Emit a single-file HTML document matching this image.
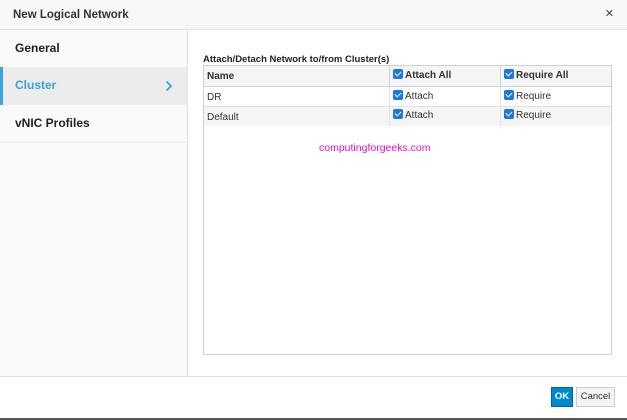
<!DOCTYPE html>
<html><head><style>
*{margin:0;padding:0;box-sizing:border-box}
body{width:627px;height:420px;overflow:hidden;background:#fff;font-family:"Liberation Sans",sans-serif;position:relative;color:#333}
.hdr{position:absolute;left:0;top:0;width:627px;height:30px;background:#f7f7f7;border-bottom:1px solid #e4e4e4}
.hdr span{position:absolute;left:13px;top:9px;font-size:11.5px;font-weight:bold;color:#333}
.x{position:absolute;right:13px;top:7px;font-size:11px;color:#444}
.side{position:absolute;left:0;top:30px;width:188px;height:346px;background:#fafafa;border-right:1px solid #e0e0e0}
.it{position:absolute;left:0;width:187px;height:38px;font-weight:bold;font-size:12px;padding:11px 0 0 15px;color:#222}
.sel{background:#ececec;border-left:3px solid #39a5dc;color:#39a5dc;padding-left:12px}
.chev{position:absolute;left:162px;top:13px}
.ttl{position:absolute;left:203px;top:54px;font-size:9.5px;font-weight:bold;color:#222}
.tbl{position:absolute;left:203px;top:65px;width:409px;height:290px;border:1px solid #d1d1d1;background:#fff}
.row{position:absolute;left:0;width:407px;font-size:10px}
.c{position:absolute;top:0;height:100%;padding-left:3px}
.cb{display:inline-block;width:10px;height:10px;background:#1a78e0;border-radius:2px;vertical-align:-1px;margin-right:2px;position:relative}
.cb:after{content:"";position:absolute;left:3px;top:1px;width:3px;height:5px;border:solid #fff;border-width:0 1.5px 1.5px 0;transform:rotate(45deg)}
.ftr{position:absolute;left:0;top:376px;width:627px;height:42px;background:#fff;border-top:1px solid #e0e0e0}
.btm{position:absolute;left:0;top:418px;width:627px;height:2px;background:#555}
.ok{position:absolute;left:551px;top:387px;width:22px;height:20px;background:#0088ce;border:1px solid #00659c;color:#fff;font-size:9.5px;font-weight:bold;text-align:center;line-height:18px}
.cn{position:absolute;left:576px;top:387px;width:39px;height:20px;background:#f3f3f3;border:1px solid #ccc;color:#333;font-size:9.5px;text-align:center;line-height:18px}
</style></head><body>
<div class="hdr"><span>New Logical Network</span><div class="x">✕</div></div>
<div class="side">
<div class="it" style="top:0">General</div>
<div class="it sel" style="top:37px">Cluster<svg class="chev" width="8" height="12" viewBox="0 0 8 12"><path d="M1.5 1.5L6 6L1.5 10.5" stroke="#39a5dc" stroke-width="1.8" fill="none"/></svg></div>
<div class="it" style="top:75px;border-bottom:1px solid #eaeaea">vNIC Profiles</div>
</div>
<div class="ttl">Attach/Detach Network to/from Cluster(s)</div>
<div class="tbl">
<div class="row" style="top:0;height:21px;background:#f5f5f5;border-bottom:1px solid #d1d1d1;font-weight:bold">
<div class="c" style="left:0;padding-top:5px">Name</div>
<div class="c" style="left:185px;border-left:1px solid #d1d1d1;padding-top:3px;width:111px"><span class="cb"></span>Attach All</div>
<div class="c" style="left:296px;border-left:1px solid #d1d1d1;padding-top:3px"><span class="cb"></span>Require All</div>
</div>
<div class="row" style="top:21px;height:20px;border-bottom:1px solid #e0e0e0">
<div class="c" style="left:0;padding-top:5px">DR</div>
<div class="c" style="left:185px;border-left:1px solid #e0e0e0;padding-top:3px"><span class="cb"></span>Attach</div>
<div class="c" style="left:296px;border-left:1px solid #e0e0e0;padding-top:3px"><span class="cb"></span>Require</div>
</div>
<div class="row" style="top:41px;height:19px;background:#f5f5f5">
<div class="c" style="left:0;padding-top:5px">Default</div>
<div class="c" style="left:185px;border-left:1px solid #e0e0e0;padding-top:2px"><span class="cb"></span>Attach</div>
<div class="c" style="left:296px;border-left:1px solid #e0e0e0;padding-top:2px"><span class="cb"></span>Require</div>
</div>
</div>
<div style="position:absolute;left:319px;top:142px;font-size:10.5px;color:#e010d0">computingforgeeks.com</div>
<div class="ftr"></div>
<div class="ok">OK</div><div class="cn">Cancel</div>
<div class="btm"></div>
</body></html>
